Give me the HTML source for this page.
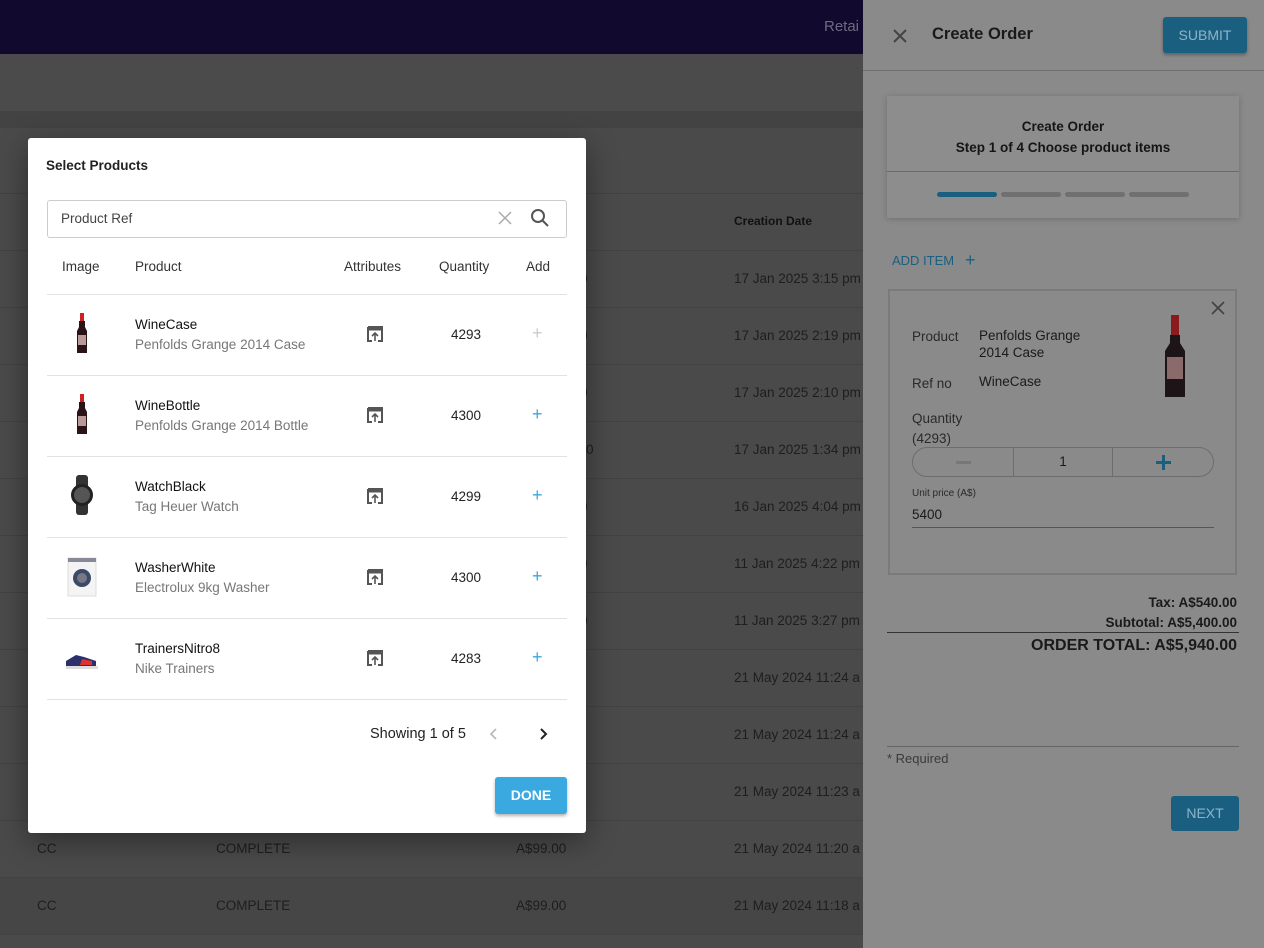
<!DOCTYPE html><html><head><style>
*{margin:0;padding:0;box-sizing:border-box}
html{width:1264px;height:948px;overflow:hidden}
body{width:1264px;height:948px;overflow:hidden;background:#4a4a4a;font-family:"Liberation Sans",sans-serif;position:relative;font-size:13.5px}
.a{position:absolute;white-space:nowrap}
.row{position:absolute;left:0;width:864px;height:57px;border-top:1px solid #424242;color:#1e1e1e;font-size:13.5px;overflow:hidden}
.row span{position:absolute;top:20px;white-space:nowrap}
.dlg{position:absolute;left:28px;top:138px;width:558px;height:695px;background:#fff;border-radius:3px;box-shadow:0 8px 30px rgba(0,0,0,.4)}
.pr{position:absolute;left:19px;width:520px;height:81px;border-top:1px solid #e2e2e2}
.pr div{white-space:nowrap}
.pr .n{position:absolute;left:88px;top:22px;color:#111}
.pr .d{position:absolute;left:88px;top:42px;color:#777}
.pr .q{position:absolute;left:404px;top:32px;color:#222}
.pr .p{position:absolute;left:485px;top:28px;color:#3aa9e0;font-size:18px}
.pr svg.at{position:absolute;left:319px;top:30px}
.pr .img{position:absolute;left:20px;top:16px;width:30px;height:44px}
.rp{position:absolute;left:863px;top:0;width:401px;height:948px;background:#8a8a8a;color:#151515}
</style></head><body>
<div class="a" style="left:0;top:0;width:864px;height:54px;background:#110a2e"></div>
<div class="a" style="left:824px;top:18px;color:#6e6a80;font-size:15px">Retai</div>
<div class="a" style="left:0;top:54px;width:864px;height:58px;background:#4b4b4b;border-bottom:1px solid #444"></div>
<div class="a" style="left:0;top:112px;width:864px;height:16px;background:#434343"></div>
<div class="a" style="left:0;top:128px;width:864px;height:65px;background:#4a4a4a"></div>
<div class="row" style="top:193px"><span style="left:734px;top:20px;font-size:12px;font-weight:bold;color:#111">Creation Date</span></div>
<div class="row" style="top:250px"><span style="left:580px">0</span><span style="left:734px">17 Jan 2025 3:15 pm</span></div>
<div class="row" style="top:307px"><span style="left:580px">0</span><span style="left:734px">17 Jan 2025 2:19 pm</span></div>
<div class="row" style="top:364px"><span style="left:580px">0</span><span style="left:734px">17 Jan 2025 2:10 pm</span></div>
<div class="row" style="top:421px"><span style="left:586px">0</span><span style="left:734px">17 Jan 2025 1:34 pm</span></div>
<div class="row" style="top:478px"><span style="left:580px">0</span><span style="left:734px">16 Jan 2025 4:04 pm</span></div>
<div class="row" style="top:535px"><span style="left:580px">0</span><span style="left:734px">11 Jan 2025 4:22 pm</span></div>
<div class="row" style="top:592px"><span style="left:580px">0</span><span style="left:734px">11 Jan 2025 3:27 pm</span></div>
<div class="row" style="top:649px"><span style="left:734px">21 May 2024 11:24 a</span></div>
<div class="row" style="top:706px"><span style="left:734px">21 May 2024 11:24 a</span></div>
<div class="row" style="top:763px"><span style="left:734px">21 May 2024 11:23 a</span></div>
<div class="row" style="top:820px"><span style="left:37px">CC</span><span style="left:216px">COMPLETE</span><span style="left:516px">A$99.00</span><span style="left:734px">21 May 2024 11:20 a</span></div>
<div class="row" style="top:877px;background:#464646"><span style="left:37px">CC</span><span style="left:216px">COMPLETE</span><span style="left:516px">A$99.00</span><span style="left:734px">21 May 2024 11:18 a</span></div>
<div class="row" style="top:934px;height:14px"></div>

<div class="dlg">
<div class="a" style="left:18px;top:20px;font-weight:bold;font-size:13.5px;color:#222">Select Products</div>
<div class="a" style="left:19px;top:62px;width:520px;height:38px;border:1px solid #ccc;border-radius:3px"></div>
<div class="a" style="left:33px;top:73px;color:#444">Product Ref</div>
<svg class="a" style="left:469px;top:72px" width="16" height="16"><path d="M2 2L14 14M14 2L2 14" stroke="#aaa" stroke-width="1.5"/></svg>
<svg class="a" style="left:502px;top:70px" width="20" height="20"><circle cx="8" cy="8" r="6" fill="none" stroke="#555" stroke-width="2"/><path d="M12.5 12.5L18 18" stroke="#555" stroke-width="2"/></svg>
<div class="a" style="left:34px;top:121px;color:#333">Image</div>
<div class="a" style="left:107px;top:121px;color:#333">Product</div>
<div class="a" style="left:316px;top:121px;color:#333">Attributes</div>
<div class="a" style="left:411px;top:121px;color:#333">Quantity</div>
<div class="a" style="left:498px;top:121px;color:#333">Add</div>
<div class="pr" style="top:156px"><svg class="img" viewBox="0 0 30 44"><rect x="13" y="2" width="4" height="8" fill="#c22"/><path d="M12 10h6v6l2 4v22h-10v-22l2-4z" fill="#2a1418"/><rect x="11" y="24" width="8" height="10" fill="#b99"/></svg><div class="n">WineCase</div><div class="d">Penfolds Grange 2014 Case</div><svg class="at" width="18" height="18"><path d="M2 2h14v14h-4M6 16H2V2" fill="none" stroke="#555" stroke-width="2"/><path d="M2 4h14" stroke="#555" stroke-width="3"/><path d="M9 16V8M6 11l3-3 3 3" fill="none" stroke="#555" stroke-width="1.6"/></svg><div class="q">4293</div><div class="p" style="color:#ccc">+</div></div>
<div class="pr" style="top:237px"><svg class="img" viewBox="0 0 30 44"><rect x="13" y="2" width="4" height="8" fill="#c22"/><path d="M12 10h6v6l2 4v22h-10v-22l2-4z" fill="#2a1418"/><rect x="11" y="24" width="8" height="10" fill="#b99"/></svg><div class="n">WineBottle</div><div class="d">Penfolds Grange 2014 Bottle</div><svg class="at" width="18" height="18"><path d="M2 2h14v14h-4M6 16H2V2" fill="none" stroke="#555" stroke-width="2"/><path d="M2 4h14" stroke="#555" stroke-width="3"/><path d="M9 16V8M6 11l3-3 3 3" fill="none" stroke="#555" stroke-width="1.6"/></svg><div class="q">4300</div><div class="p">+</div></div>
<div class="pr" style="top:318px"><svg class="img" viewBox="0 0 30 44"><rect x="9" y="2" width="12" height="40" rx="3" fill="#333"/><circle cx="15" cy="22" r="11" fill="#222"/><circle cx="15" cy="22" r="8" fill="#555"/></svg><div class="n">WatchBlack</div><div class="d">Tag Heuer Watch</div><svg class="at" width="18" height="18"><path d="M2 2h14v14h-4M6 16H2V2" fill="none" stroke="#555" stroke-width="2"/><path d="M2 4h14" stroke="#555" stroke-width="3"/><path d="M9 16V8M6 11l3-3 3 3" fill="none" stroke="#555" stroke-width="1.6"/></svg><div class="q">4299</div><div class="p">+</div></div>
<div class="pr" style="top:399px"><svg class="img" viewBox="0 0 30 44"><rect x="1" y="4" width="28" height="38" fill="#f4f4f4" stroke="#ddd"/><rect x="1" y="4" width="28" height="4" fill="#889"/><circle cx="15" cy="24" r="9" fill="#3b4a66"/><circle cx="15" cy="24" r="5" fill="#778"/></svg><div class="n">WasherWhite</div><div class="d">Electrolux 9kg Washer</div><svg class="at" width="18" height="18"><path d="M2 2h14v14h-4M6 16H2V2" fill="none" stroke="#555" stroke-width="2"/><path d="M2 4h14" stroke="#555" stroke-width="3"/><path d="M9 16V8M6 11l3-3 3 3" fill="none" stroke="#555" stroke-width="1.6"/></svg><div class="q">4300</div><div class="p">+</div></div>
<div class="pr" style="top:480px"><svg class="img" style="width:36px;left:17px" viewBox="0 0 36 44"><path d="M2 26l10-6 8 2 12 4v6H2z" fill="#2b2f6a"/><path d="M18 24l10 2v4H16z" fill="#d33"/><rect x="2" y="31" width="32" height="3" fill="#ddd"/></svg><div class="n">TrainersNitro8</div><div class="d">Nike Trainers</div><svg class="at" width="18" height="18"><path d="M2 2h14v14h-4M6 16H2V2" fill="none" stroke="#555" stroke-width="2"/><path d="M2 4h14" stroke="#555" stroke-width="3"/><path d="M9 16V8M6 11l3-3 3 3" fill="none" stroke="#555" stroke-width="1.6"/></svg><div class="q">4283</div><div class="p">+</div></div>
<div class="pr" style="top:561px;height:1px"></div>
<div class="a" style="left:342px;top:588px;font-size:14.5px;color:#222">Showing 1 of 5</div>
<svg class="a" style="left:461px;top:589px" width="10" height="14"><path d="M7 2L2 7l5 5" fill="none" stroke="#bbb" stroke-width="1.8"/></svg>
<svg class="a" style="left:510px;top:589px" width="10" height="14"><path d="M3 2l5 5-5 5" fill="none" stroke="#222" stroke-width="2"/></svg>
<div class="a" style="left:467px;top:639px;width:72px;height:37px;background:#3aa9e0;border-radius:3px;color:#fff;font-weight:bold;font-size:14px;text-align:center;line-height:37px;box-shadow:0 2px 3px rgba(0,0,0,.3)">DONE</div>
</div>

<div class="rp">
<svg class="a" style="left:29px;top:28px" width="16" height="16"><path d="M2 2L14 14M14 2L2 14" stroke="#444" stroke-width="2"/></svg>
<div class="a" style="left:69px;top:25px;font-size:16.5px;font-weight:bold;color:#1a1a1a">Create Order</div>
<div class="a" style="left:300px;top:17px;width:84px;height:36px;background:#1b5f80;border-radius:3px;color:#8fb4c7;text-align:center;line-height:36px;font-size:14px;box-shadow:0 2px 3px rgba(0,0,0,.3)">SUBMIT</div>
<div class="a" style="left:0;top:70px;width:401px;height:1px;background:#6f6f6f"></div>
<div class="a" style="left:24px;top:96px;width:352px;height:122px;background:#8d8d8d;box-shadow:0 1px 6px rgba(0,0,0,.2)">
<div class="a" style="left:0;top:20px;width:352px;text-align:center;font-size:13.5px;color:#151515;line-height:21px;font-weight:bold">Create Order<br>Step 1 of 4 Choose product items</div>
<div class="a" style="left:0;top:75px;width:352px;height:1px;background:#6a6a6a"></div>
<div class="a" style="left:50px;top:96px;width:60px;height:5px;border-radius:3px;background:#1b5f80"></div>
<div class="a" style="left:114px;top:96px;width:60px;height:5px;border-radius:3px;background:#707070"></div>
<div class="a" style="left:178px;top:96px;width:60px;height:5px;border-radius:3px;background:#707070"></div>
<div class="a" style="left:242px;top:96px;width:60px;height:5px;border-radius:3px;background:#707070"></div>
</div>
<div class="a" style="left:29px;top:249px;color:#1b5f80;font-size:13px">ADD ITEM &nbsp; <span style="font-size:18px;position:relative;top:1px">+</span></div>
<div class="a" style="left:25px;top:289px;width:349px;height:286px;border:2px solid #7a7a7a">
<svg class="a" style="left:321px;top:10px" width="14" height="14"><path d="M1 1L13 13M13 1L1 13" stroke="#444" stroke-width="1.8"/></svg>
<div class="a" style="left:22px;top:38px;color:#2a2a2a">Product</div>
<div class="a" style="left:89px;top:36px;color:#1a1a1a;line-height:17px">Penfolds Grange<br>2014 Case</div>
<div class="a" style="left:22px;top:85px;color:#2a2a2a">Ref no</div>
<div class="a" style="left:89px;top:83px;color:#1a1a1a">WineCase</div>
<svg class="a" style="left:270px;top:22px" width="30" height="86" viewBox="0 0 30 86"><rect x="11" y="2" width="8" height="20" fill="#8a1a20"/><path d="M10 22h10v8l5 8v46H5V38l5-8z" fill="#1c1416"/><rect x="7" y="44" width="16" height="22" fill="#8a6a6a"/></svg>
<div class="a" style="left:22px;top:118px;color:#2a2a2a;line-height:20px">Quantity<br>(4293)</div>
<div class="a" style="left:22px;top:156px;width:302px;height:30px;border:1px solid #6d6d6d;border-radius:15px">
<div class="a" style="left:100px;top:0;width:1px;height:28px;background:#6d6d6d"></div>
<div class="a" style="left:199px;top:0;width:1px;height:28px;background:#6d6d6d"></div>
<div class="a" style="left:43px;top:13px;width:15px;height:3px;background:#777"></div>
<div class="a" style="left:100px;top:6px;width:100px;text-align:center;color:#1a1a1a">1</div>
<div class="a" style="left:243px;top:13px;width:15px;height:3px;background:#1b5f80"></div>
<div class="a" style="left:249px;top:7px;width:3px;height:15px;background:#1b5f80"></div>
</div>
<div class="a" style="left:22px;top:197px;font-size:10px;color:#2a2a2a">Unit price (A$)</div>
<div class="a" style="left:22px;top:216px;color:#1a1a1a">5400</div>
<div class="a" style="left:22px;top:236px;width:302px;height:1px;background:#555"></div>
</div>
<div class="a" style="left:0;top:593px;width:374px;text-align:right;font-weight:bold;color:#1a1a1a;line-height:20px">Tax: A$540.00<br>Subtotal: A$5,400.00</div>
<div class="a" style="left:24px;top:632px;width:352px;height:1px;background:#333"></div>
<div class="a" style="left:0;top:637px;width:374px;text-align:right;font-weight:bold;color:#1a1a1a;font-size:16px">ORDER TOTAL: A$5,940.00</div>
<div class="a" style="left:24px;top:746px;width:352px;height:1px;background:#666"></div>
<div class="a" style="left:24px;top:751px;color:#3a3a3a;font-size:13px">* Required</div>
<div class="a" style="left:308px;top:796px;width:68px;height:35px;background:#1b5f80;border-radius:3px;color:#8fb4c7;text-align:center;line-height:35px;font-size:14px">NEXT</div>
</div>
</body></html>
